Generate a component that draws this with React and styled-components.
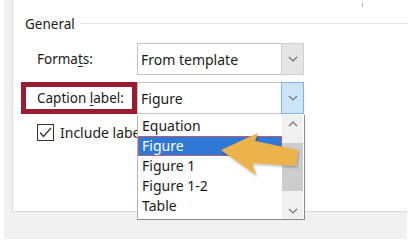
import React from "react";
import styled, { createGlobalStyle } from "styled-components";

const Global = createGlobalStyle`
  html, body { margin: 0; padding: 0; background: #ffffff; }
  body { font-family: "Noto Sans", "Open Sans", sans-serif; color: #1a1a1a; }
`;

const Page = styled.div`
  position: relative;
  width: 412px;
  height: 244px;
  padding-left: 4px;
  box-sizing: border-box;
  overflow: hidden;
`;

const Dialog = styled.div`
  width: 403px;
  height: 239px;
  background: #f0f0f0;
  padding-left: 8px;
  box-sizing: border-box;
`;

const Panel = styled.div`
  position: relative;
  height: 212px;
  background: #ffffff;
  border-left: 1px solid #dadada;
  border-bottom: 1px solid #dadada;
  box-sizing: border-box;
`;

const Tick = styled.div`
  position: absolute;
  left: 349px;
  top: 3px;
  width: 1px;
  height: 4px;
  background: #b0b0b0;
`;

const GroupHeader = styled.div`
  display: flex;
  align-items: center;
  gap: 6px;
  padding: 14px 0 0 12px;
  height: 20px;
  font-size: 13.5px;
  color: #1a1a1a;
`;

const GroupLine = styled.div`
  flex: 1;
  height: 1px;
  background: #e3e3e3;
  margin-top: -1px;
`;

const Form = styled.div`
  display: flex;
  flex-direction: column;
  gap: 7px;
  padding: 9px 0 0 8px;
`;

const Row = styled.div`
  display: flex;
  align-items: stretch;
  height: 32px;
`;

const LabelCell = styled.div`
  width: 116px;
  box-sizing: border-box;
  border: 5px solid ${(p) => (p.$highlight ? "#9b1c31" : "transparent")};
  padding-left: 11px;
  display: flex;
  align-items: center;
  font-size: 13.5px;
  color: #1a1a1a;
  white-space: nowrap;
`;

const U = styled.span`
  text-decoration: underline;
  text-underline-offset: 2px;
  text-decoration-thickness: 1px;
`;

const Combo = styled.div`
  width: 167px;
  box-sizing: border-box;
  border: 1px solid #c4c4c4;
  display: flex;
  background: #ffffff;
`;

const ComboText = styled.div`
  flex: 1;
  display: flex;
  align-items: center;
  padding-left: 3px;
  font-size: 14px;
  color: #1a1a1a;
`;

const ComboButton = styled.div`
  width: 23px;
  box-sizing: border-box;
  display: flex;
  align-items: center;
  justify-content: center;
  background: ${(p) => (p.$active ? "#cce4f7" : "#e5e5e5")};
  border: 1px solid ${(p) => (p.$active ? "#7fb4e4" : "#cfcfcf")};
  margin: -1px -1px -1px 0;
`;

const CheckRow = styled.div`
  display: flex;
  align-items: center;
  gap: 6px;
  padding: 10px 0 0 24px;
  font-size: 14px;
  line-height: 17px;
  color: #1a1a1a;
`;

const CheckBox = styled.div`
  width: 17px;
  height: 17px;
  box-sizing: border-box;
  border: 1px solid #333333;
  display: flex;
  align-items: center;
  justify-content: center;
  background: #fff;
`;

const CheckText = styled.span`
  white-space: nowrap;
`;

const List = styled.div`
  position: absolute;
  left: 124px;
  top: 115px;
  width: 168px;
  height: 105px;
  box-sizing: border-box;
  background: #ffffff;
  border: 1px solid #8a8a8a;
  border-left-color: #b5b5b5;
  border-top: none;
  display: flex;
`;

const Items = styled.div`
  flex: 1;
  display: flex;
  flex-direction: column;
  padding-top: 1px;
`;

const Item = styled.div`
  height: 20px;
  box-sizing: border-box;
  display: flex;
  align-items: center;
  padding-left: 3px;
  font-size: 14px;
  line-height: 16px;
  color: ${(p) => (p.$selected ? "#ffffff" : "#1a1a1a")};
  background: ${(p) => (p.$selected ? "#2f78d6" : "transparent")};
  border: 1px solid ${(p) => (p.$selected ? "#b0607a" : "transparent")};
`;

const ScrollBar = styled.div`
  width: 21px;
  background: #f0f0f0;
  display: flex;
  flex-direction: column;
  align-items: center;
  margin-right: 1px;
`;

const ScrollArrow = styled.div`
  height: 21px;
  width: 100%;
  display: flex;
  align-items: center;
  justify-content: center;
`;

const Track = styled.div`
  flex: 1;
  width: 100%;
  display: flex;
  flex-direction: column;
  padding: 11px 0 11px;
  box-sizing: border-box;
`;

const Thumb = styled.div`
  height: 48px;
  background: #cdcdcd;
  width: 100%;
`;

const Arrow = styled.svg`
  position: absolute;
  left: 0;
  top: 0;
  pointer-events: none;
`;

const Chevron = ({ dir = "down", color = "#707070" }) => (
  <svg width="10" height="6" viewBox="0 0 10 6">
    <path
      d={dir === "down" ? "M1 1 L5 5 L9 1" : "M1 5 L5 1 L9 5"}
      fill="none"
      stroke={color}
      strokeWidth="1.1"
    />
  </svg>
);

export default function App() {
  return (
    <>
      <Global />
      <Page>
        <Dialog>
          <Panel>
            <Tick />
            <GroupHeader>
              General
              <GroupLine />
            </GroupHeader>
            <Form>
              <Row>
                <LabelCell>
                  <span>
                    Forma<U>t</U>s:
                  </span>
                </LabelCell>
                <Combo>
                  <ComboText>From template</ComboText>
                  <ComboButton>
                    <Chevron />
                  </ComboButton>
                </Combo>
              </Row>
              <Row>
                <LabelCell $highlight>
                  <span>
                    Caption <U>l</U>abel:
                  </span>
                </LabelCell>
                <Combo>
                  <ComboText>Figure</ComboText>
                  <ComboButton $active>
                    <Chevron />
                  </ComboButton>
                </Combo>
              </Row>
            </Form>
            <CheckRow>
              <CheckBox>
                <svg width="13" height="11" viewBox="0 0 13 11">
                  <path d="M1 5.5 L4.5 9.5 L12 1" fill="none" stroke="#333" strokeWidth="1.2" />
                </svg>
              </CheckBox>
              <CheckText>Include labe</CheckText>
            </CheckRow>
            <List>
              <Items>
                <Item>Equation</Item>
                <Item $selected>Figure</Item>
                <Item>Figure 1</Item>
                <Item>Figure 1-2</Item>
                <Item>Table</Item>
              </Items>
              <ScrollBar>
                <ScrollArrow>
                  <Chevron dir="up" />
                </ScrollArrow>
                <Track>
                  <Thumb />
                </Track>
                <ScrollArrow>
                  <Chevron />
                </ScrollArrow>
              </ScrollBar>
            </List>
          </Panel>
        </Dialog>
        <Arrow width="412" height="244" viewBox="0 0 412 244">
          <defs>
            <filter id="sh" x="-20%" y="-20%" width="140%" height="140%">
              <feDropShadow dx="1" dy="1.5" stdDeviation="1.2" floodColor="#000" floodOpacity="0.3" />
            </filter>
          </defs>
          <polygon
            points="221,150 258,133 255,141 298,150 296,166 252,163 256,175"
            fill="#edb34b"
            filter="url(#sh)"
          />
        </Arrow>
      </Page>
    </>
  );
}
